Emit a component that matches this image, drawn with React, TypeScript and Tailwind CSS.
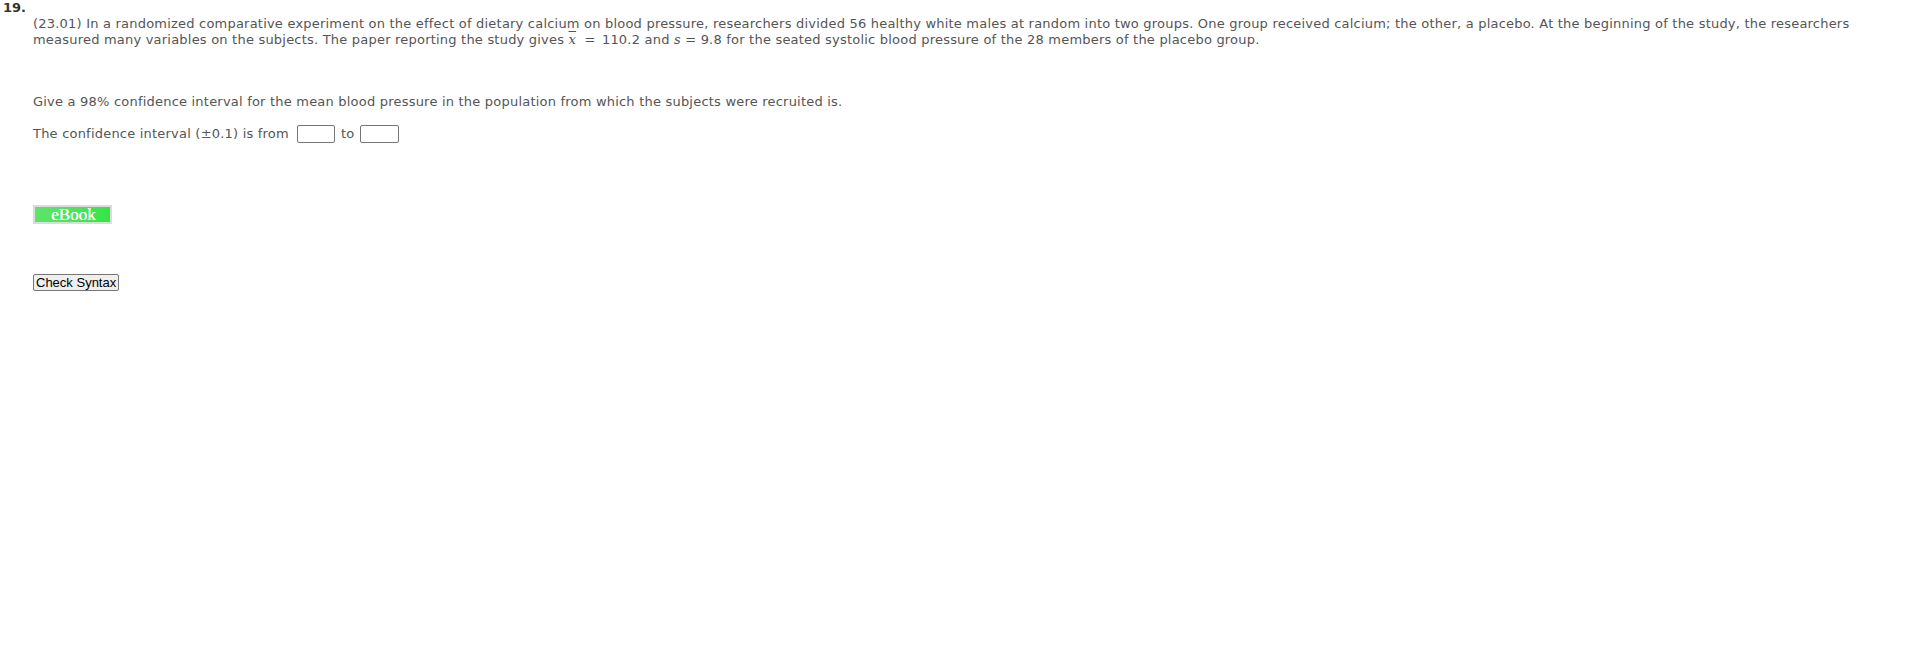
import React from "react";

export default function App() {
  return (
    <div className="w-[1905px] h-[648px] bg-white text-[#555] font-['DejaVu_Sans',Verdana,sans-serif] text-[13px] tracking-[0.21px]">
      <div className="pl-[3px] pt-[2px] h-[16px] font-bold text-[13px] leading-[12px] tracking-normal text-[#333]">19.</div>
      <div className="pl-[33px]">
        <p className="leading-[16px] w-[1855px]">
          (23.01) In a randomized comparative experiment on the effect of dietary calcium on blood pressure, researchers divided 56 healthy white males at random into two groups. One group received calcium; the other, a placebo. At the beginning of the study, the researchers measured many variables on the subjects. The paper reporting the study gives{" "}
          <span className="font-['DejaVu_Serif',serif] italic overline">x</span>{" "}
          <span className="font-['DejaVu_Serif',serif] ml-[4px] mr-[2px]">=</span> 110.2 and{" "}
          <span className="font-['DejaVu_Serif',serif] italic">s</span> = 9.8 for the seated systolic blood pressure of the 28 members of the placebo group.
        </p>
        <p className="mt-[46px] leading-[16px]">
          Give a 98% confidence interval for the mean blood pressure in the population from which the subjects were recruited is.
        </p>
        <div className="mt-[15px] flex items-center h-[18px] leading-[16px]">
          <span>
            The confidence interval (<span className="font-['DejaVu_Serif',serif]">±</span>0.1) is from
          </span>
          <span className="ml-[8px] inline-block w-[38px] h-[18px] border border-[#767676] rounded-[2px] bg-white"></span>
          <span className="ml-[6px]">to</span>
          <span className="ml-[6px] inline-block w-[39px] h-[18px] border border-[#767676] rounded-[2px] bg-white"></span>
        </div>
        <div className="mt-[62px] w-[79px] h-[19px] border-2 border-[#dcdcdc] bg-gradient-to-r from-[#5ee36c] to-[#34e545] flex items-center justify-center">
          <span className="font-['Liberation_Serif',serif] text-white text-[17px] leading-[15px] tracking-normal pl-[2px] [text-shadow:0_0_0.4px_#fff]">eBook</span>
        </div>
        <div className="mt-[49px]">
          <button className="h-[17px] px-[2px] border border-[#767676] rounded-[2px] bg-[#efefef] text-black font-['Liberation_Sans',Arial,sans-serif] text-[13px] leading-[15px] tracking-normal">
            Check Syntax
          </button>
        </div>
      </div>
    </div>
  );
}
